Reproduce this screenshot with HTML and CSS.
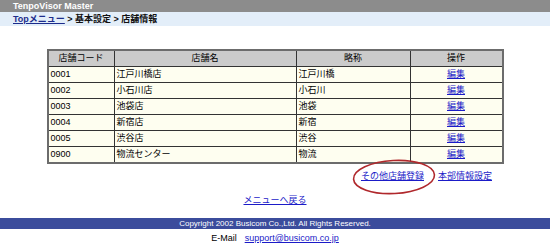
FILE: index.html
```html
<!DOCTYPE html>
<html lang="ja">
<head>
<meta charset="utf-8">
<title>TenpoVisor Master</title>
<link rel="stylesheet" href="styles.css">
</head>
<body>
<div class="titlebar">TenpoVisor Master</div>
<div class="crumbs"><a href="#" class="crumb-link">Topメニュー</a> &gt; 基本設定 &gt; 店舗情報</div>

<table class="shops">
  <thead>
    <tr><th class="c-code">店舗コード</th><th class="c-name">店舗名</th><th class="c-abbr">略称</th><th class="c-op">操作</th></tr>
  </thead>
  <tbody>
    <tr><td>0001</td><td>江戸川橋店</td><td>江戸川橋</td><td class="op"><a href="#">編集</a></td></tr>
    <tr><td>0002</td><td>小石川店</td><td>小石川</td><td class="op"><a href="#">編集</a></td></tr>
    <tr><td>0003</td><td>池袋店</td><td>池袋</td><td class="op"><a href="#">編集</a></td></tr>
    <tr><td>0004</td><td>新宿店</td><td>新宿</td><td class="op"><a href="#">編集</a></td></tr>
    <tr><td>0005</td><td>渋谷店</td><td>渋谷</td><td class="op"><a href="#">編集</a></td></tr>
    <tr><td>0900</td><td>物流センター</td><td>物流</td><td class="op"><a href="#">編集</a></td></tr>
  </tbody>
</table>

<div class="actions">
  <a href="#" class="act">その他店舗登録</a><a href="#" class="act act2">本部情報設定</a>
  <svg class="circle" width="86" height="38" viewBox="0 0 86 38"><ellipse cx="43" cy="19" rx="40.5" ry="16.5" fill="none" stroke="#b0282c" stroke-width="1.6" transform="rotate(-3 43 19)"/></svg>
</div>

<div class="back"><a href="#">メニューへ戻る</a></div>

<div class="footer">Copyright 2002 Busicom Co.,Ltd. All Rights Reserved.</div>
<div class="mail"><span class="mail-label">E-Mail</span><a href="#">support@busicom.co.jp</a></div>
</body>
</html>
```

FILE: styles.css
```css
html, body {
  margin: 0;
  padding: 0;
  background: #ffffff;
}
body {
  font-family: "Liberation Sans", "Noto Sans CJK JP", sans-serif;
  font-size: 9px;
  color: #000;
}
a {
  color: #1b1bc8;
  text-decoration: underline;
}
.titlebar {
  height: 12px;
  line-height: 12px;
  background: #8c8c8c;
  color: #ffffff;
  font-weight: bold;
  padding-left: 13px;
}
.crumbs {
  height: 14px;
  line-height: 14px;
  background: #e3eef9;
  padding-left: 13px;
  font-weight: bold;
  color: #111;
}
.crumb-link {
  color: #1c2c8c;
}
.shops {
  margin: 23px auto 0;
  border-collapse: collapse;
  width: 434px;
  border: 2px solid #6c6c6c;
  table-layout: fixed;
}
.shops th, .shops td {
  border: 1px solid #333;
  height: 15px;
  padding: 0 2px;
  line-height: 15px;
  white-space: nowrap;
}
.shops th {
  background: #cbcbcb;
  font-weight: normal;
  text-align: center;
}
.shops td {
  background: #fefef0;
  text-align: left;
}
.shops td.op {
  text-align: center;
}
.c-code { width: 61px; }
.c-name { width: 177px; }
.c-abbr { width: 109px; }
.c-op { width: 87px; }
.actions {
  position: relative;
  width: 434px;
  margin: 7px auto 0;
  height: 11px;
  line-height: 11px;
  display: flex;
  justify-content: flex-end;
}
.act2 {
  margin-left: 14px;
}
.circle {
  position: absolute;
  left: 293px;
  top: -13px;
}
.back {
  margin-top: 13px;
  height: 11px;
  line-height: 11px;
  text-align: center;
}
.footer {
  margin-top: 12px;
  height: 11px;
  line-height: 11px;
  background: #3b4c9c;
  color: #ffffff;
  font-size: 8px;
  text-align: center;
}
.mail {
  margin-top: 4px;
  height: 11px;
  line-height: 11px;
  text-align: center;
}
.mail-label {
  margin-right: 8px;
}
```
